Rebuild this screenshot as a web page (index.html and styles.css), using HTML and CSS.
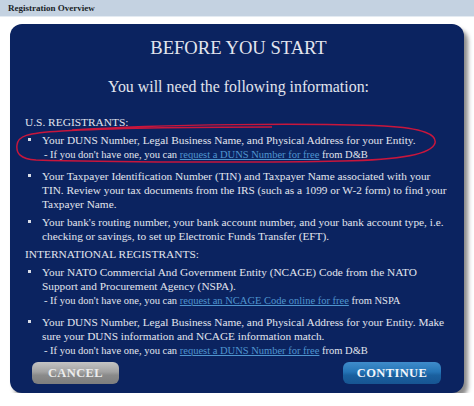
FILE: index.html
```html
<!DOCTYPE html>
<html lang="en">
<head>
    <meta charset="UTF-8">
    <meta name="viewport" content="width=device-width, initial-scale=1.0">
    <title>Registration Overview</title>
    <link rel="stylesheet" href="styles.css">
</head>
<body>
    <header class="titlebar">Registration Overview</header>
    <div class="panel">
        <h1>BEFORE YOU START</h1>
        <h2>You will need the following information:</h2>

        <div class="section">U.S. REGISTRANTS:</div>
        <ul class="items">
            <li class="has-note">
                Your DUNS Number, Legal Business Name, and Physical Address for your Entity.
                <div class="note">- If you don't have one, you can <a href="#">request a DUNS Number for free</a> from D&amp;B</div>
            </li>
            <li>Your Taxpayer Identification Number (TIN) and Taxpayer Name associated with your TIN. Review your tax documents from the IRS (such as a 1099 or W-2 form) to find your Taxpayer Name.</li>
            <li>Your bank's routing number, your bank account number, and your bank account type, i.e. checking or savings, to set up Electronic Funds Transfer (EFT).</li>
        </ul>

        <div class="section section-intl">INTERNATIONAL REGISTRANTS:</div>
        <ul class="items">
            <li class="has-note">
                Your NATO Commercial And Government Entity (NCAGE) Code from the NATO Support and Procurement Agency (NSPA).
                <div class="note">- If you don't have one, you can <a href="#">request an NCAGE Code online for free</a> from NSPA</div>
            </li>
            <li class="has-note">
                Your DUNS Number, Legal Business Name, and Physical Address for your Entity. Make sure your DUNS information and NCAGE information match.
                <div class="note">- If you don't have one, you can <a href="#">request a DUNS Number for free</a> from D&amp;B</div>
            </li>
        </ul>

        <div class="actions">
            <button class="btn btn-cancel">CANCEL</button>
            <button class="btn btn-continue">CONTINUE</button>
        </div>

        <!-- hand drawn highlight from the screenshot -->
        <svg class="scribble" width="430" height="44" viewBox="0 0 430 44">
            <path d="M60 7 C150 1 300 0 372 3 C412 5 425 12 423 20 C420 31 390 37 330 38 C240 40 90 39 24 37 C8 36 4 30 5 22 C6 13 14 10 50 8 C120 4 210 4 260 4"
                  fill="none" stroke="#c8163c" stroke-width="1.5"/>
        </svg>
    </div>
</body>
</html>
```
FILE: styles.css
```css
body {
    margin: 0;
    padding: 0;
    background: #ffffff;
    font-family: "Liberation Serif", "Times New Roman", serif;
}

.titlebar {
    height: 16px;
    line-height: 16px;
    padding-left: 8px;
    background-color: #c4d2e1;
    border-bottom: 1px solid #e4ebf2;
    color: #1a1f28;
    font-size: 9px;
    font-weight: bold;
}

.panel {
    position: relative;
    margin: 7px 0 0 10px;
    width: 454px;
    height: 369px;
    box-sizing: border-box;
    padding: 13px 12px 0 15px;
    background-color: #0b2360;
    border-radius: 12px;
    box-shadow: 4px 5px 4px rgba(60, 60, 60, 0.6);
    color: #e2e5ee;
}

.panel h1 {
    margin: 0;
    font-size: 18.6px;
    font-weight: normal;
    line-height: 22px;
    text-align: center;
}

.panel h2 {
    margin: 17px 0 0 0;
    font-size: 15.9px;
    font-weight: normal;
    line-height: 22px;
    text-align: center;
}

.section {
    font-size: 11.4px;
    line-height: 14px;
    margin-top: 17px;
}

.section-intl {
    margin-top: 2px;
}

.items {
    list-style: none;
    margin: 4px 0 0 0;
    padding: 0;
}

.items li {
    position: relative;
    padding-left: 17px;
    font-size: 11.3px;
    line-height: 14px;
    margin-bottom: 4px;
}

.items li.has-note {
    margin-bottom: 7px;
}

.items li::before {
    content: "";
    position: absolute;
    left: 3px;
    top: 5px;
    width: 3px;
    height: 3px;
    background: #d8dce6;
}

.note {
    font-size: 10.5px;
    line-height: 14px;
    margin-top: 1px;
    padding-left: 2px;
}

.note a {
    color: #4f95cf;
}

.actions {
    display: flex;
    justify-content: space-between;
    margin-top: -3px;
    padding: 0 11px 0 7px;
}

.btn {
    height: 22px;
    border: none;
    border-radius: 6px;
    font-family: "Liberation Serif", "Times New Roman", serif;
    font-size: 12.5px;
    font-weight: bold;
    letter-spacing: 0.4px;
    cursor: pointer;
}

.btn-cancel {
    width: 87px;
    background: linear-gradient(#c4c4c4, #a2a2a2 45%, #8a8a8a 60%, #7e7e7e);
    color: #ececec;
}

.btn-continue {
    width: 98px;
    background: linear-gradient(#3f8ccb, #2574b6 45%, #1a609f 60%, #175592);
    color: #f2f5fa;
}

.scribble {
    position: absolute;
    left: 2px;
    top: 99px;
}
```
